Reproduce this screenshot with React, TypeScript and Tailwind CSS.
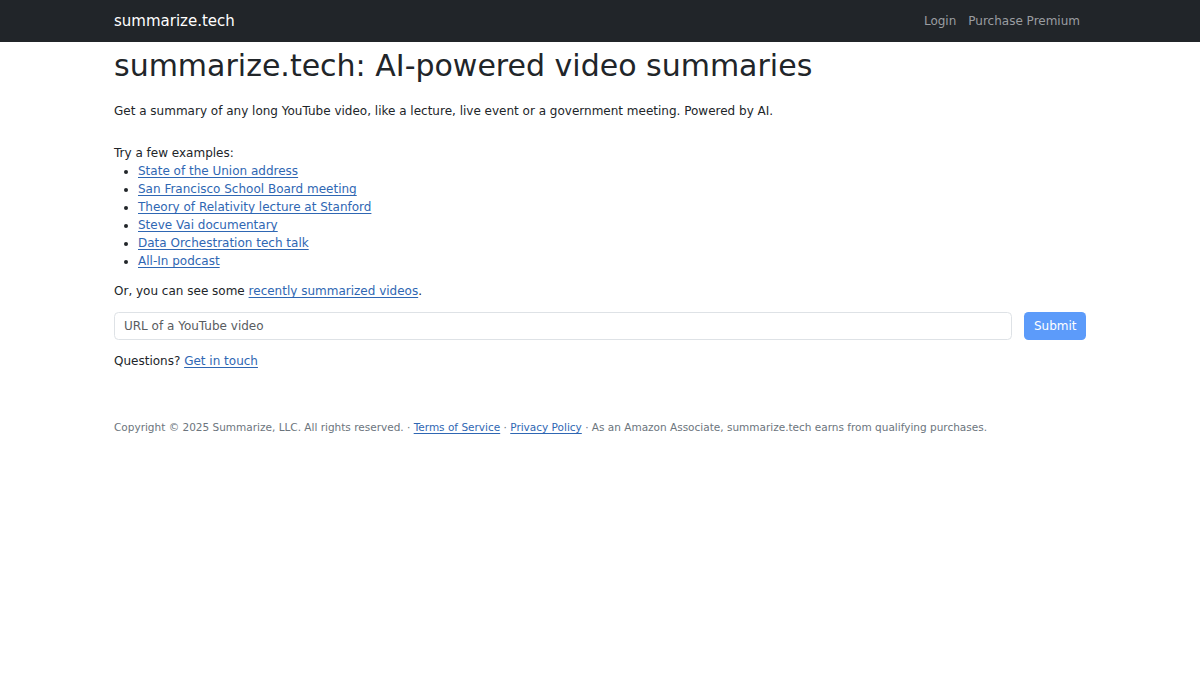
export default function App() {
  const examples = [
    "State of the Union address",
    "San Francisco School Board meeting",
    "Theory of Relativity lecture at Stanford",
    "Steve Vai documentary",
    "Data Orchestration tech talk",
    "All-In podcast",
  ];

  return (
    <div className="min-h-[675px] bg-white text-[#212529] font-['DejaVu_Sans',sans-serif] text-[12px] leading-[18px]">
      {/* Navbar */}
      <nav className="h-[42px] bg-[#212529]">
        <div className="w-[972px] mx-auto h-full flex items-center justify-between">
          <a className="text-white text-[15px] leading-[22px]">summarize.tech</a>
          <div className="flex items-center">
            <a className="px-[6px] text-[#9a9da1]">Login</a>
            <a className="px-[6px] text-[#9a9da1]">Purchase Premium</a>
          </div>
        </div>
      </nav>

      {/* Main */}
      <main className="w-[972px] mx-auto">
        <h1 className="mt-[6px] text-[30px] leading-[36px] font-normal">
          summarize.tech: AI-powered video summaries
        </h1>
        <p className="mt-[18px]">
          Get a summary of any long YouTube video, like a lecture, live event or
          a government meeting. Powered by AI.
        </p>

        <p className="mt-[24px]">Try a few examples:</p>
        <ul className="list-disc pl-[24px]">
          {examples.map((e) => (
            <li key={e}>
              <a className="text-[#2f67b3] underline underline-offset-[2px]">{e}</a>
            </li>
          ))}
        </ul>

        <p className="mt-[12px]">
          Or, you can see some{" "}
          <a className="text-[#2f67b3] underline underline-offset-[2px]">
            recently summarized videos
          </a>
          .
        </p>

        <div className="mt-[12px] flex gap-[12px]">
          <input
            className="flex-1 h-[28px] px-[9px] border border-[#dee2e6] rounded-[4.5px] outline-none placeholder:text-[#595c5f] text-[12px]"
            placeholder="URL of a YouTube video"
          />
          <button className="h-[28px] px-[9.5px] rounded-[4.5px] bg-[#5c9bfa] text-white text-[12px]">
            Submit
          </button>
        </div>

        <p className="mt-[12px]">
          Questions?{" "}
          <a className="text-[#2f67b3] underline underline-offset-[2px]">Get in touch</a>
        </p>

        <footer className="mt-[49px] text-[10.5px] leading-[16px] text-[#6c757d]">
          Copyright © 2025 Summarize, LLC. All rights reserved. ·{" "}
          <a className="text-[#2f67b3] underline underline-offset-[2px]">Terms of Service</a> ·{" "}
          <a className="text-[#2f67b3] underline underline-offset-[2px]">Privacy Policy</a> · As
          an Amazon Associate, summarize.tech earns from qualifying purchases.
        </footer>
      </main>
    </div>
  );
}
